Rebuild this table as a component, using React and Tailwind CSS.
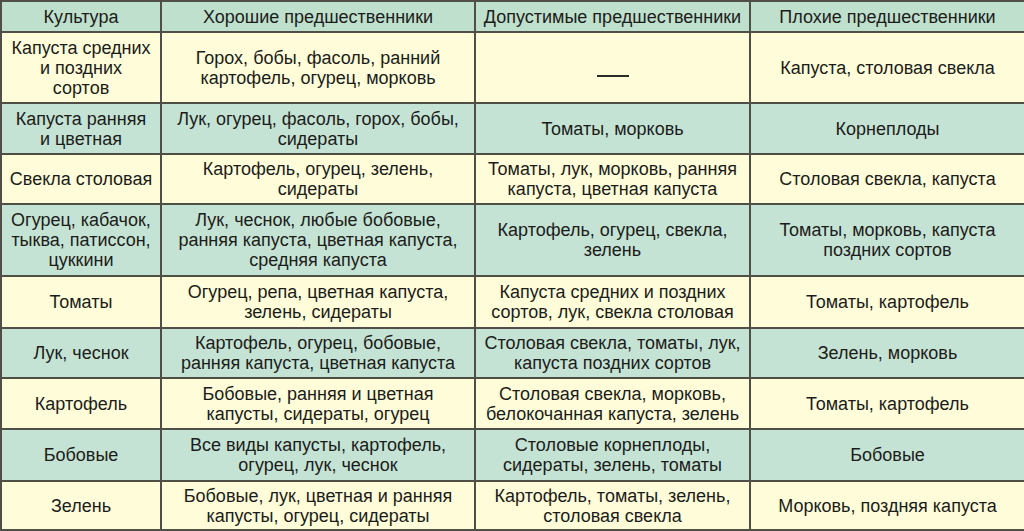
const rows = [
  {
    h: "h-[71px]",
    crop: ["Капуста средних", "и поздних", "сортов"],
    good: ["Горох, бобы, фасоль, ранний", "картофель, огурец, морковь"],
    ok: null,
    bad: ["Капуста, столовая свекла"],
  },
  {
    h: "h-[51px]",
    crop: ["Капуста ранняя", "и цветная"],
    good: ["Лук, огурец, фасоль, горох, бобы,", "сидераты"],
    ok: ["Томаты, морковь"],
    bad: ["Корнеплоды"],
  },
  {
    h: "h-[50px]",
    crop: ["Свекла столовая"],
    good: ["Картофель, огурец, зелень,", "сидераты"],
    ok: ["Томаты, лук, морковь, ранняя", "капуста, цветная капуста"],
    bad: ["Столовая свекла, капуста"],
  },
  {
    h: "h-[72px]",
    crop: ["Огурец, кабачок,", "тыква, патиссон,", "цуккини"],
    good: ["Лук, чеснок, любые бобовые,", "ранняя капуста, цветная капуста,", "средняя капуста"],
    ok: ["Картофель, огурец, свекла,", "зелень"],
    bad: ["Томаты, морковь, капуста", "поздних сортов"],
  },
  {
    h: "h-[52px]",
    crop: ["Томаты"],
    good: ["Огурец, репа, цветная капуста,", "зелень, сидераты"],
    ok: ["Капуста средних и поздних", "сортов, лук, свекла столовая"],
    bad: ["Томаты, картофель"],
  },
  {
    h: "h-[50px]",
    crop: ["Лук, чеснок"],
    good: ["Картофель, огурец, бобовые,", "ранняя капуста, цветная капуста"],
    ok: ["Столовая свекла, томаты, лук,", "капуста поздних сортов"],
    bad: ["Зелень, морковь"],
  },
  {
    h: "h-[51px]",
    crop: ["Картофель"],
    good: ["Бобовые, ранняя и цветная", "капусты, сидераты, огурец"],
    ok: ["Столовая свекла, морковь,", "белокочанная капуста, зелень"],
    bad: ["Томаты, картофель"],
  },
  {
    h: "h-[52px]",
    crop: ["Бобовые"],
    good: ["Все виды капусты, картофель,", "огурец, лук, чеснок"],
    ok: ["Столовые корнеплоды,", "сидераты, зелень, томаты"],
    bad: ["Бобовые"],
  },
  {
    h: "h-[49px]",
    crop: ["Зелень"],
    good: ["Бобовые, лук, цветная и ранняя", "капусты, огурец, сидераты"],
    ok: ["Картофель, томаты, зелень,", "столовая свекла"],
    bad: ["Морковь, поздняя капуста"],
  },
];

const cell = "border-2 border-[#4f4f47] text-center align-middle px-1 leading-5 whitespace-nowrap";

function Lines({ lines }) {
  return lines.map((l, i) => <div key={i}>{l}</div>);
}

export default function App() {
  return (
    <div className="w-[1024px] h-[531px] bg-[#fefcd9] font-['Liberation_Sans',Arial,sans-serif] text-[18px] text-[#1c1c1a] overflow-hidden">
      <table className="w-[1024px] border-collapse table-fixed">
        <colgroup>
          <col className="w-[160px]" />
          <col className="w-[314px]" />
          <col className="w-[275px]" />
          <col className="w-[275px]" />
        </colgroup>
        <thead>
          <tr className="h-[31px] bg-[#bfe0cd]">
            <th className={`${cell} font-normal`}>Культура</th>
            <th className={`${cell} font-normal`}>Хорошие предшественники</th>
            <th className={`${cell} font-normal`}>Допустимые предшественники</th>
            <th className={`${cell} font-normal`}>Плохие предшественники</th>
          </tr>
        </thead>
        <tbody>
          {rows.map((r, i) => (
            <tr key={i} className={`${r.h} ${i % 2 === 0 ? "bg-[#fefcd9]" : "bg-[#c5e3d4]"}`}>
              <td className={cell}>
                <Lines lines={r.crop} />
              </td>
              <td className={cell}>
                <Lines lines={r.good} />
              </td>
              <td className={cell}>
                {r.ok ? (
                  <Lines lines={r.ok} />
                ) : (
                  <div className="mx-auto mt-[16px] w-[32px] h-[2px] bg-[#2a2a26]" />
                )}
              </td>
              <td className={cell}>
                <Lines lines={r.bad} />
              </td>
            </tr>
          ))}
        </tbody>
      </table>
    </div>
  );
}
